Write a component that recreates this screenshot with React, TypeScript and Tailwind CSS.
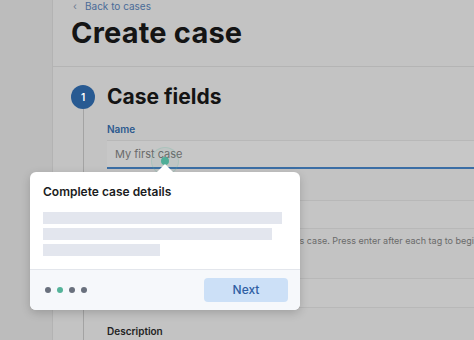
import React from "react";

function Beacon() {
  return (
    <div className="absolute left-[151px] top-[147px] w-[28px] h-[28px] rounded-full border border-[#54b399]/20 bg-[#54b399]/5 flex items-center justify-center">
      <div className="w-[8px] h-[8px] rounded-full bg-[#4fae98]" />
    </div>
  );
}

function TourPopover() {
  return (
    <div className="absolute left-[30px] top-[172px] w-[270px] rounded-[6px] bg-white shadow-[0_3px_10px_rgba(0,0,0,0.18)]">
      <div className="absolute -top-[8px] left-[127px] w-0 h-0 border-l-[8px] border-r-[8px] border-b-[8px] border-l-transparent border-r-transparent border-b-white" />
      <div className="px-[13px] pt-[12px] pb-[13px]">
        <h3 className="text-[12px] font-semibold text-[#1a1c21] leading-[16px]">Complete case details</h3>
        <div className="mt-[12px] flex flex-col gap-[4px]">
          <div className="h-[12px] w-[239px] bg-[#e3e6ee]" />
          <div className="h-[12px] w-[229px] bg-[#e3e6ee]" />
          <div className="h-[12px] w-[117px] bg-[#e3e6ee]" />
        </div>
      </div>
      <div className="border-t border-[#e3e6ec] bg-[#f6f8fb] rounded-b-[6px] h-[41px] flex items-center justify-between pl-[15px] pr-[12px]">
        <div className="flex items-center gap-[6px]">
          <span className="w-[6px] h-[6px] rounded-full bg-[#69707d]" />
          <span className="w-[6px] h-[6px] rounded-full bg-[#54b399]" />
          <span className="w-[6px] h-[6px] rounded-full bg-[#69707d]" />
          <span className="w-[6px] h-[6px] rounded-full bg-[#69707d]" />
        </div>
        <button className="w-[84px] h-[24px] rounded-[4px] bg-[#cce0f7] text-[12px] font-medium text-[#2f5ea3]">Next</button>
      </div>
    </div>
  );
}

export default function App() {
  return (
    <div
      className="relative w-[474px] h-[340px] overflow-hidden flex bg-[#c3c3c3]"
      style={{ fontFamily: "Inter, 'Noto Sans', sans-serif" }}
    >
      <aside className="w-[53px] shrink-0 bg-[#bcbcbc] border-r border-[#b3b3b3]" />
      <main className="flex-1 min-w-0">
        <header className="h-[67px] border-b border-[#b4b4b4] pl-[18px]">
          <a className="flex items-center text-[10px] leading-[12px] text-[#4a6b98] whitespace-nowrap">
            <span className="w-[14px] pl-[2px] text-[#6b7a90]">‹</span>
            <span>Back to cases</span>
          </a>
          <h1 className="mt-[3px] text-[29px] leading-[35px] font-bold text-[#141414] tracking-[0.2px]">Create case</h1>
        </header>
        <section className="relative pl-[18px] pt-[18px]">
          <div className="absolute left-[30px] top-[42px] w-[1px] h-[300px] bg-[#a3a3a3]" />
          <div className="flex items-center gap-[12px]">
            <div className="w-[24px] h-[24px] rounded-full bg-[#285a92] text-white text-[10px] font-semibold flex items-center justify-center">1</div>
            <h2 className="text-[21px] leading-[24px] font-bold text-[#141414]">Case fields</h2>
          </div>
          <div className="pl-[36px] mt-[14px]">
            <label className="block text-[10px] leading-[12px] font-semibold text-[#2d5a8f]">Name</label>
            <div className="mt-[5px] h-[29px] bg-[#c7c7c7] border-t border-[#b8b8b8] border-b-2 border-b-[#3b6ea5] flex items-center pl-[8px] whitespace-nowrap">
              <span className="text-[11px] text-[#6a6a6a]">My first case</span>
            </div>
            <label className="block mt-[12px] text-[10px] leading-[12px] font-semibold text-[#222]">Tags</label>
            <div className="mt-[7px] h-[29px] bg-[#c5c5c5] border-y border-[#b8b8b8]" />
            <p className="mt-[6px] -ml-[12px] text-[9px] leading-[12px] text-[#6a6a6a] whitespace-nowrap">
              Type one or more custom identifying tags for this case. Press enter after each tag to begin a new one.
            </p>
            <label className="block mt-[12px] text-[10px] leading-[12px] font-semibold text-[#222]">Category</label>
            <div className="mt-[7px] h-[30px] bg-[#c5c5c5] border-y border-[#b8b8b8]" />
            <label className="block mt-[17px] text-[10px] leading-[12px] font-semibold text-[#222]">Description</label>
          </div>
        </section>
      </main>
      <Beacon />
      <TourPopover />
    </div>
  );
}
